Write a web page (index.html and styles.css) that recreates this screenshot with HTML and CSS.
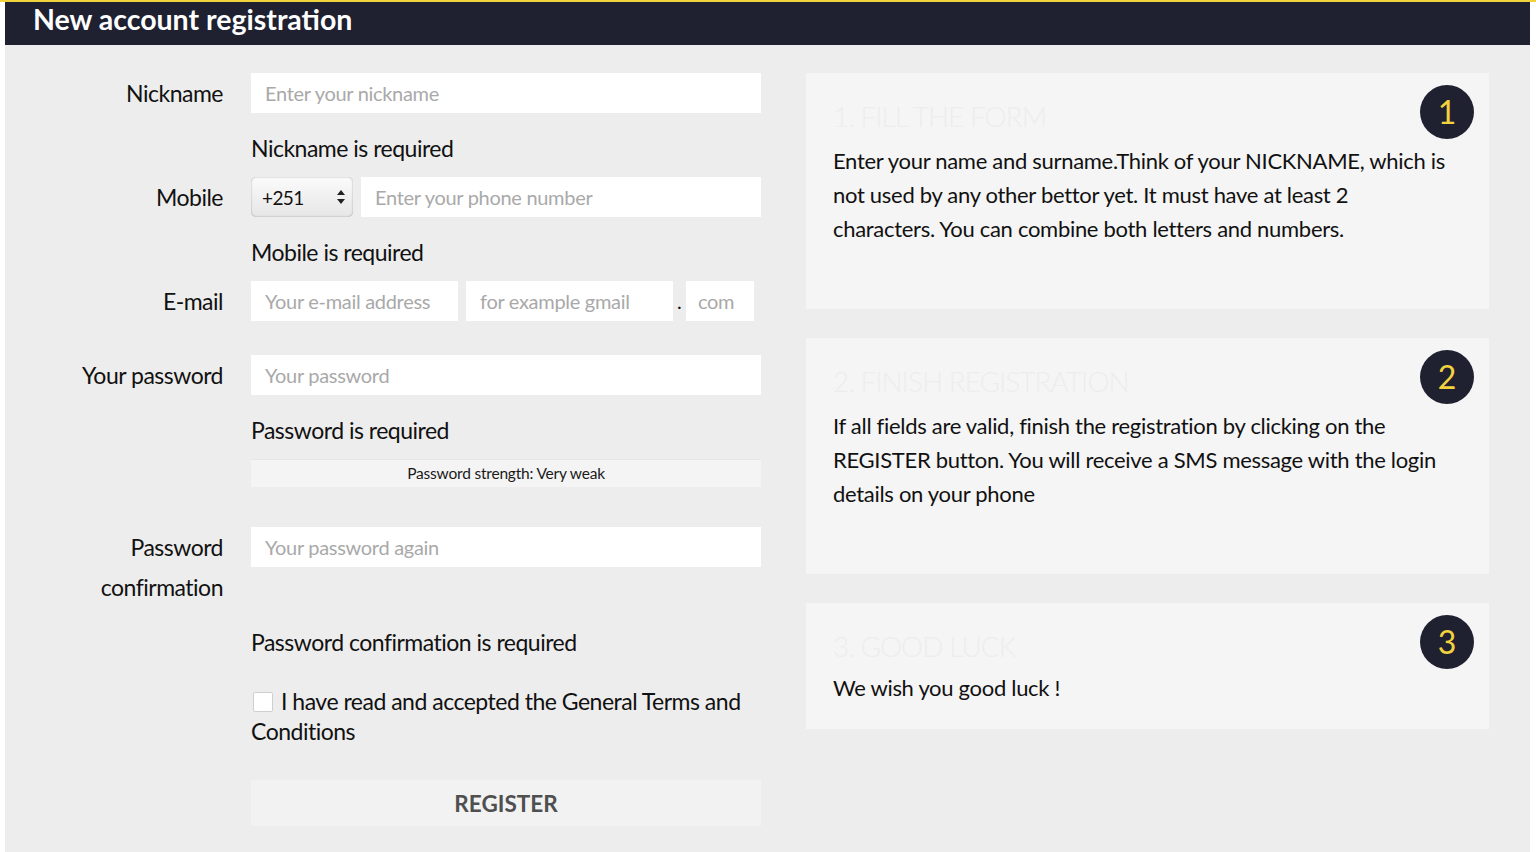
FILE: index.html
```html
<!DOCTYPE html>
<html lang="en">
<head>
<meta charset="utf-8">
<title>New account registration</title>
<link rel="stylesheet" href="styles.css">
</head>
<body>
<div class="topline"></div>
<div class="page">
  <header class="header"><h1 class="title">New account registration</h1></header>
  <main class="main">
    <form class="form">
      <div class="row">
        <label class="label">Nickname</label>
        <div class="field"><input class="input" type="text" placeholder="Enter your nickname"></div>
      </div>
      <div class="error">Nickname is required</div>

      <div class="row">
        <label class="label">Mobile</label>
        <div class="field split">
          <div class="select"><span>+251</span>
            <svg class="arrows" width="8" height="14" viewBox="0 0 8 14"><path d="M4 0L8 5H0Z M4 14L0 9H8Z" fill="#222"/></svg>
          </div>
          <input class="input grow" type="text" placeholder="Enter your phone number">
        </div>
      </div>
      <div class="error">Mobile is required</div>

      <div class="row">
        <label class="label">E-mail</label>
        <div class="field split">
          <input class="input mail" type="text" placeholder="Your e-mail address">
          <input class="input mail" type="text" placeholder="for example gmail">
          <span class="dot">.</span>
          <input class="input tld" type="text" placeholder="com">
        </div>
      </div>

      <div class="row gap-top">
        <label class="label">Your password</label>
        <div class="field"><input class="input" type="password" placeholder="Your password"></div>
      </div>
      <div class="error">Password is required</div>
      <div class="strength">Password strength: Very weak</div>

      <div class="row confirm-row">
        <label class="label">Password confirmation</label>
        <div class="field"><input class="input" type="password" placeholder="Your password again"></div>
      </div>
      <div class="error">Password confirmation is required</div>

      <div class="terms"><span class="checkbox"></span>I have read and accepted the General Terms and Conditions</div>

      <div class="btn-row"><button class="register" type="button">REGISTER</button></div>
    </form>

    <aside class="steps">
      <section class="card tall">
        <div class="badge">1</div>
        <h2 class="card-title">1. FILL THE FORM</h2>
        <p class="card-text">Enter your name and surname.Think of your NICKNAME, which is not used by any other bettor yet. It must have at least 2 characters. You can combine both letters and numbers.</p>
      </section>
      <section class="card tall">
        <div class="badge">2</div>
        <h2 class="card-title">2. FINISH REGISTRATION</h2>
        <p class="card-text">If all fields are valid, finish the registration by clicking on the REGISTER button. You will receive a SMS message with the login details on your phone</p>
      </section>
      <section class="card short">
        <div class="badge">3</div>
        <h2 class="card-title">3. GOOD LUCK</h2>
        <p class="card-text">We wish you good luck !</p>
      </section>
    </aside>
  </main>
</div>
</body>
</html>
```

FILE: styles.css
```css
* { box-sizing: border-box; }
html, body { margin: 0; padding: 0; background: #fff; }
body { font-family: Lato, "Open Sans", sans-serif; color: #111; letter-spacing: -0.3px; }

.topline { height: 2px; background: #f0d33c; }

.page {
  margin: 0 6px 0 5px;
  background: #ededed;
  min-height: 850px;
}

.header {
  height: 43px;
  background: #1f2131;
  padding-left: 28px;
}
.title {
  margin: 0;
  color: #fff;
  font-size: 28.5px;
  font-weight: 700;
  line-height: 35px;
  letter-spacing: 0;
}

.main {
  display: flex;
  align-items: flex-start;
  padding-top: 28px;
  gap: 45px;
}

.form { width: 756px; display: flex; flex-direction: column; }

.row { display: flex; align-items: flex-start; gap: 28px; }
.gap-top { margin-top: 34px; }
.label {
  width: 218px;
  text-align: right;
  font-size: 23px;
  line-height: 40px;
  letter-spacing: -0.5px;
}
.confirm-row .label { padding-left: 90px; }
.field { width: 510px; }
.split { display: flex; align-items: center; gap: 8px; }

.input {
  display: block;
  width: 100%;
  height: 40px;
  border: 0;
  background: #fff;
  padding: 0 14px;
  font-family: Lato, sans-serif;
  font-size: 20px;
  letter-spacing: -0.3px;
  color: #222;
  outline: none;
}
.input::placeholder { color: #a9a9a9; }
.grow { flex: 1; width: auto; }
.mail { width: 207px; }
.tld { width: 68px; padding: 0 12px; }
.dot { font-size: 20px; width: 5px; margin: 0 -4px 0 -4px; line-height: 40px; }

.select {
  width: 102px;
  height: 40px;
  flex: none;
  display: flex;
  align-items: center;
  justify-content: space-between;
  padding: 0 8px 0 11px;
  border-radius: 5px;
  background: linear-gradient(#fbfbfb, #e6e6e6);
  box-shadow: 0 0 2px rgba(0,0,0,0.35) inset;
  font-size: 19px;
  letter-spacing: -0.6px;
}

.error {
  margin: 20px 0 14px 246px;
  font-size: 23px;
  line-height: 30px;
  letter-spacing: -0.5px;
}

.strength {
  margin-left: 246px;
  width: 510px;
  height: 28px;
  background: #f4f4f4;
  border-top: 1px solid #e6e6e6;
  text-align: center;
  font-size: 15.5px;
  line-height: 27px;
  letter-spacing: -0.2px;
  color: #1a1a1a;
}
.confirm-row { margin-top: 40px; }

.terms {
  margin: 15px 0 0 246px;
  width: 510px;
  font-size: 23px;
  line-height: 30px;
  letter-spacing: -0.5px;
}
.checkbox {
  display: inline-block;
  width: 20px;
  height: 20px;
  margin: 0 8px 0 2px;
  vertical-align: -2px;
  background: #fff;
  border: 1px solid #cfcfcf;
  border-radius: 2px;
}

.btn-row { margin: 34px 0 0 246px; }
.register {
  width: 510px;
  height: 46px;
  border: 0;
  background: #f2f2f2;
  color: #4f4f4f;
  font-family: Lato, sans-serif;
  font-size: 22.5px;
  font-weight: 700;
  letter-spacing: 0;
  cursor: pointer;
}

.steps { width: 683px; display: flex; flex-direction: column; gap: 29px; }
.card {
  position: relative;
  background: #f5f5f5;
  padding: 26px 27px 20px;
}
.card.tall { min-height: 236px; }
.badge {
  position: absolute;
  top: 12px;
  right: 15px;
  width: 54px;
  height: 54px;
  border-radius: 50%;
  background: #1f2131;
  color: #f3d33d;
  font-size: 32px;
  line-height: 54px;
  text-align: center;
  letter-spacing: 0;
}
.card-title {
  margin: 0;
  font-size: 28px;
  font-weight: 300;
  line-height: 34px;
  letter-spacing: -1px;
  color: #ededed;
}
.card-text {
  margin: 11px 0 0;
  max-width: 617px;
  font-size: 22px;
  line-height: 34px;
  letter-spacing: -0.3px;
}
.card.short { padding-bottom: 24px; }
.card.short .card-text { margin-top: 8px; }
```
